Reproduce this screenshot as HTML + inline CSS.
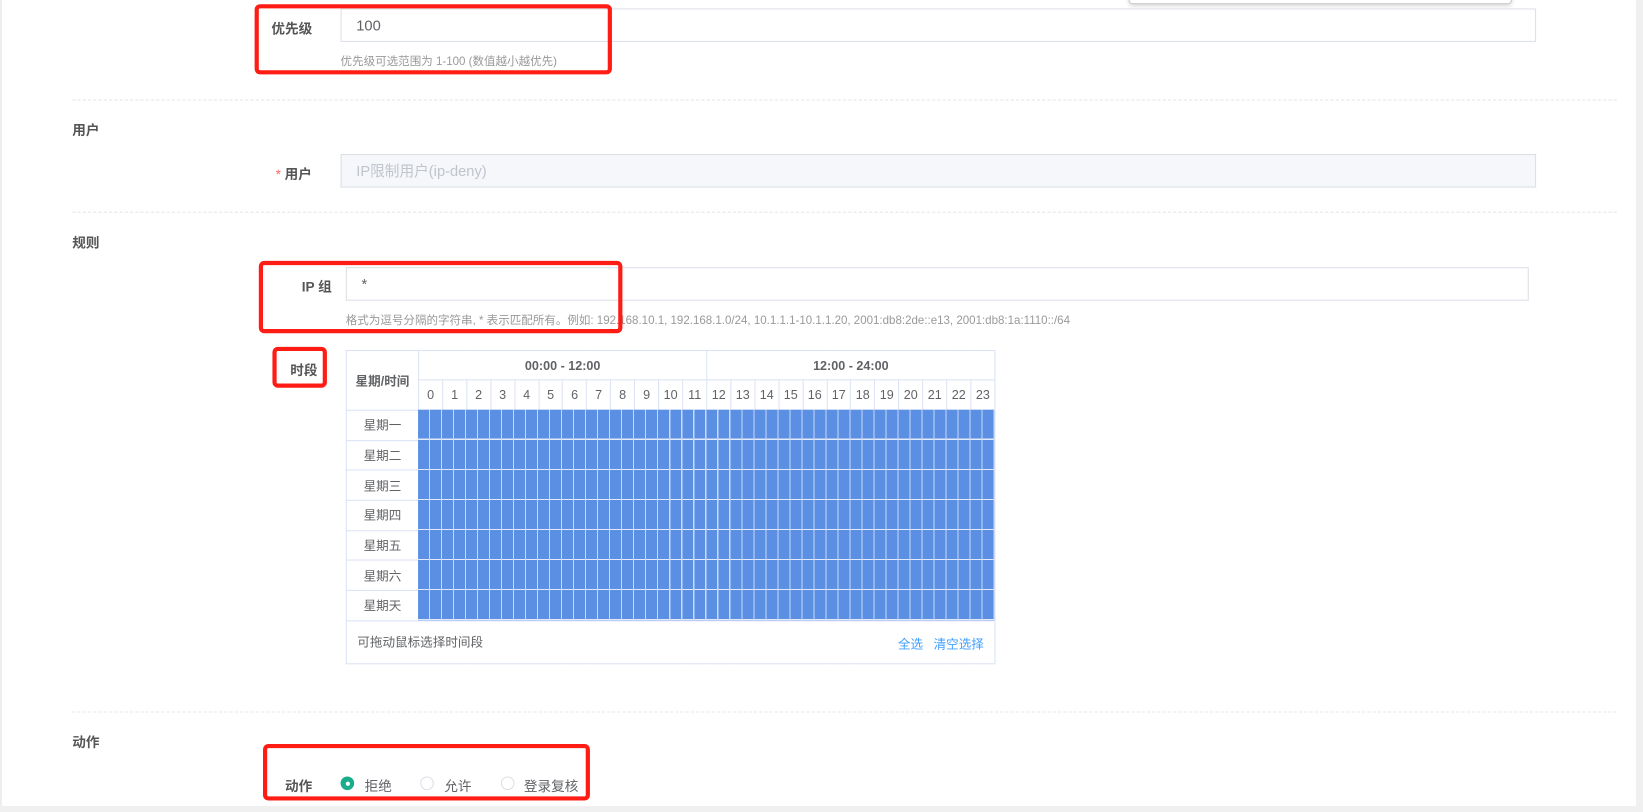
<!DOCTYPE html>
<html><head><meta charset="utf-8"><style>
*{margin:0;padding:0;box-sizing:border-box}
body{width:1643px;height:812px;overflow:hidden;background:#fff;font-family:"Liberation Sans","Noto Sans CJK SC",sans-serif;color:#606266;position:relative}
#w{position:absolute;left:0;top:0;width:1568px;height:775px;transform:scale(1.04783);transform-origin:0 0}
.a{position:absolute}
.lbl{font-size:13px;font-weight:bold;color:#555}
.inp{border:1px solid #dcdfe6;background:#fff;font-size:14px;color:#606266;padding-left:14px;display:flex;align-items:center}
.help{font-size:11px;color:#999}
.dash{height:0;border-top:1px dashed #e4e7ed;left:69px;width:1474px}
.red{border:4px solid #fe1c14;border-radius:5px}
table{border-collapse:collapse;font-size:12px;color:#606266;table-layout:fixed}
td{border:1px solid #dde3f5;text-align:center;padding:0}
.radio{width:13px;height:13px;border-radius:50%;border:1px solid #dcdfe6;display:inline-block}
</style></head><body>
<div class="a" style="left:0;top:0;width:2px;height:812px;background:#eee"></div>
<div class="a" style="left:1636px;top:0;width:7px;height:812px;background:#f0f0f0"></div>
<div class="a" style="left:0;top:806px;width:1643px;height:6px;background:#f0f0f0"></div>
<div id="w">
<div class="a" style="left:1077px;top:-6px;width:366px;height:10px;background:#fff;border:1px solid #ccc;border-radius:4px;box-shadow:0 2px 4px rgba(0,0,0,.15)"></div>

<div class="a lbl" style="left:259px;top:17px">优先级</div>
<div class="a inp" style="left:325px;top:8px;width:1141px;height:32px">100</div>
<div class="a help" style="left:325px;top:50px">优先级可选范围为 1-100 (数值越小越优先)</div>
<div class="a dash" style="top:95px"></div>

<div class="a lbl" style="left:69px;top:114px">用户</div>
<div class="a lbl" style="left:263px;top:156px"><span style="color:#f56c6c;font-weight:normal">*</span> 用户</div>
<div class="a inp" style="left:325px;top:147px;width:1141px;height:32px;background:#f5f7fa;color:#c0c4cc">IP限制用户(ip-deny)</div>
<div class="a dash" style="top:202px"></div>

<div class="a lbl" style="left:69px;top:221px">规则</div>
<div class="a lbl" style="left:288px;top:263px">IP 组</div>
<div class="a inp" style="left:330px;top:255px;width:1129px;height:32px">*</div>
<div class="a help" style="left:330px;top:297px">格式为逗号分隔的字符串, * 表示匹配所有。例如: 192.168.10.1, 192.168.1.0/24, 10.1.1.1-10.1.1.20, 2001:db8:2de::e13, 2001:db8:1a:1110::/64</div>
<div class="a lbl" style="left:277px;top:343px">时段</div>

<table class="a" style="left:330px;top:334px;width:619px">
<colgroup><col style="width:69px"><col span="24" style="width:22.917px"></colgroup>
<tr style="height:28px"><td rowspan="2" style="font-weight:bold">星期/时间</td><td colspan="12" style="font-weight:bold">00:00 - 12:00</td><td colspan="12" style="font-weight:bold">12:00 - 24:00</td></tr>
<tr style="height:29px"><td>0</td><td>1</td><td>2</td><td>3</td><td>4</td><td>5</td><td>6</td><td>7</td><td>8</td><td>9</td><td>10</td><td>11</td><td>12</td><td>13</td><td>14</td><td>15</td><td>16</td><td>17</td><td>18</td><td>19</td><td>20</td><td>21</td><td>22</td><td>23</td></tr>
<tr style="height:28.7px"><td>星期一</td><td colspan="24" rowspan="7" style="padding:0"></td></tr>
<tr style="height:28.7px"><td>星期二</td></tr>
<tr style="height:28.7px"><td>星期三</td></tr>
<tr style="height:28.7px"><td>星期四</td></tr>
<tr style="height:28.7px"><td>星期五</td></tr>
<tr style="height:28.7px"><td>星期六</td></tr>
<tr style="height:28.7px"><td>星期天</td></tr>
<tr style="height:41px"><td colspan="25" style="text-align:left;padding:0 10px;position:relative">可拖动鼠标选择时间段<span style="position:absolute;right:10px;top:13px;color:#409eff">全选&nbsp;&nbsp;&nbsp;清空选择</span></td></tr>
</table>
<div class="a" style="left:399px;top:391px;width:550px;height:201px;background-color:#5a8fe4;background-image:repeating-linear-gradient(90deg,transparent 0 10.46px,#c9d8f3 10.46px 11.46px),repeating-linear-gradient(180deg,transparent 0 27.7px,#e2e9f8 27.7px 28.7px)"></div>

<div class="a dash" style="top:679px"></div>
<div class="a lbl" style="left:69px;top:698px">动作</div>
<div class="a lbl" style="left:272px;top:740px">动作</div>
<div class="a" style="left:325px;top:741px;width:13px;height:13px;border-radius:50%;background:#1aad8c;display:flex;align-items:center;justify-content:center"><div style="width:4px;height:4px;border-radius:50%;background:#fff"></div></div>
<div class="a" style="left:348px;top:740px;font-size:13px">拒绝</div>
<div class="a radio" style="left:401px;top:741px"></div>
<div class="a" style="left:424px;top:740px;font-size:13px">允许</div>
<div class="a radio" style="left:478px;top:741px"></div>
<div class="a" style="left:500px;top:740px;font-size:13px">登录复核</div>

<div class="a red" style="left:243px;top:4px;width:341px;height:67px"></div>
<div class="a red" style="left:247px;top:249px;width:347px;height:69px"></div>
<div class="a red" style="left:260px;top:331px;width:52px;height:39px"></div>
<div class="a red" style="left:251px;top:710px;width:312px;height:54px"></div>
</div>
</body></html>
